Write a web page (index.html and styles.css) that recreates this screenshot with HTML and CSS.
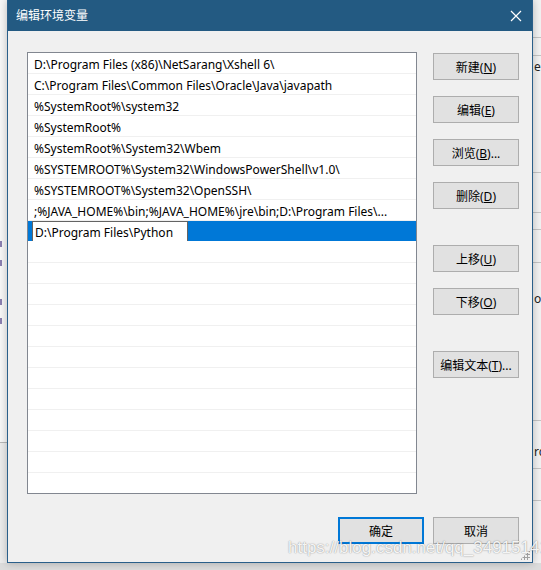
FILE: index.html
```html
<!DOCTYPE html>
<html lang="zh-CN">
<head>
	<meta charset="UTF-8">
	<title>编辑环境变量</title>
	<link rel="stylesheet" href="styles.css">
</head>
<body>
	<div class="desktop">
		<!-- bits of the windows behind the dialog -->
		<div class="back-left">
			<span class="mark" style="top:241px"></span>
			<span class="mark" style="top:260px"></span>
			<span class="mark" style="top:299px"></span>
			<span class="mark" style="top:318px"></span>
		</div>
		<div class="back-left-lower"></div>
		<div class="back-right">
			<span class="rline" style="top:37px"></span>
			<span class="rline" style="top:55px"></span>
			<span class="rtext" style="top:58px">e:</span>
			<span class="rline" style="top:172px"></span>
			<span class="rline" style="top:212px"></span>
			<span class="rline" style="top:229px"></span>
			<span class="rline" style="top:262px"></span>
			<span class="rtext" style="top:290px">o</span>
			<span class="rline" style="top:420px"></span>
			<span class="rtext" style="top:443px">rc</span>
			<span class="rline" style="top:468px"></span>
			<span class="rline" style="top:500px"></span>
		</div>
		<div class="back-bottom"></div>

		<div class="dialog">
			<div class="titlebar">
				<span class="title">编辑环境变量</span>
				<svg class="close" width="12" height="12" viewBox="0 0 12 12">
					<path d="M1 1 L11 11 M11 1 L1 11" stroke="#fff" stroke-width="1.2" fill="none"/>
				</svg>
			</div>
			<div class="content">
				<div class="main">
					<div class="list">
						<div class="row">D:\Program Files (x86)\NetSarang\Xshell 6\</div>
						<div class="row">C:\Program Files\Common Files\Oracle\Java\javapath</div>
						<div class="row">%SystemRoot%\system32</div>
						<div class="row">%SystemRoot%</div>
						<div class="row">%SystemRoot%\System32\Wbem</div>
						<div class="row">%SYSTEMROOT%\System32\WindowsPowerShell\v1.0\</div>
						<div class="row">%SYSTEMROOT%\System32\OpenSSH\</div>
						<div class="row">;%JAVA_HOME%\bin;%JAVA_HOME%\jre\bin;D:\Program Files\...</div>
						<div class="row selected"><span class="edit">D:\Program Files\Python</span></div>
						<div class="row"></div>
						<div class="row"></div>
						<div class="row"></div>
						<div class="row"></div>
						<div class="row"></div>
						<div class="row"></div>
						<div class="row"></div>
						<div class="row"></div>
						<div class="row"></div>
						<div class="row"></div>
						<div class="row"></div>
						<div class="row last"></div>
					</div>
					<div class="side">
						<button class="btn first">新建(<u>N</u>)</button>
						<button class="btn">编辑(<u>E</u>)</button>
						<button class="btn">浏览(<u>B</u>)...</button>
						<button class="btn">删除(<u>D</u>)</button>
						<button class="btn spaced">上移(<u>U</u>)</button>
						<button class="btn">下移(<u>O</u>)</button>
						<button class="btn spaced">编辑文本(<u>T</u>)...</button>
					</div>
				</div>
				<div class="footer">
					<button class="btn default">确定</button>
					<button class="btn">取消</button>
				</div>
			</div>
			<div class="grip"></div>
		</div>
		<div class="watermark">https://blog.csdn.net/qq_34915141</div>
	</div>
</body>
</html>
```

FILE: styles.css
```css
body {
	margin: 0;
	width: 541px;
	height: 570px;
	overflow: hidden;
	background: #f4f4f4;
	font-family: "Noto Sans", "Noto Sans CJK SC", sans-serif;
	font-size: 12px;
}
.desktop {
	position: relative;
	width: 541px;
	height: 570px;
}
.back-left {
	position: absolute;
	left: 0;
	top: 0;
	width: 8px;
	height: 442px;
	background: #f7f7f7;
}
.back-left .mark {
	position: absolute;
	left: 0;
	width: 2px;
	height: 6px;
	background: #8a7fb0;
}
.back-left-lower {
	position: absolute;
	left: 0;
	top: 442px;
	width: 8px;
	height: 128px;
	background: #ececec;
	border-top: 1px solid #b8b8b8;
}
.back-right {
	position: absolute;
	left: 533px;
	top: 0;
	width: 8px;
	height: 570px;
	background: #f2f2f2;
}
.back-right .rline {
	position: absolute;
	left: 0;
	width: 8px;
	height: 1px;
	background: #c4c4c4;
}
.back-right .rtext {
	position: absolute;
	left: 1px;
	font-size: 12px;
	color: #222;
}
.back-bottom {
	position: absolute;
	left: 0;
	top: 563px;
	width: 541px;
	height: 7px;
	background: #dcdcdc;
}
.dialog {
	position: absolute;
	left: 7px;
	top: 0;
	width: 526px;
	height: 563px;
	box-sizing: border-box;
	border: 1px solid #2a5f8a;
	border-top: none;
	background: #f0f0f0;
	box-shadow: 0 0 8px rgba(0, 0, 0, 0.25);
}
.titlebar {
	height: 31px;
	background: #235a82;
	display: flex;
	align-items: center;
	justify-content: space-between;
	padding: 0 10px 0 8px;
	color: #fff;
}
.title {
	font-size: 12px;
	padding-bottom: 2px;
}
.close {
	display: block;
}
.content {
	padding: 21px 13px 0 19px;
}
.main {
	display: flex;
	gap: 16px;
}
.list {
	width: 390px;
	height: 442px;
	box-sizing: border-box;
	border: 1px solid #828790;
	background: #fff;
	overflow: hidden;
}
.row {
	height: 21px;
	box-sizing: border-box;
	border-bottom: 1px solid #f0f0f0;
	padding: 3px 0 0 6px;
	line-height: 17px;
	color: #000;
	white-space: nowrap;
	overflow: hidden;
}
.row.selected {
	background: #0078d7;
	padding: 0 0 0 4px;
	border-bottom-color: #fff;
}
.row .edit {
	display: inline-block;
	width: 156px;
	height: 21px;
	box-sizing: border-box;
	border: 1px solid #646464;
	background: #fff;
	padding: 2px 0 0 2px;
	line-height: 17px;
	vertical-align: top;
}
.side {
	display: flex;
	flex-direction: column;
	gap: 16px;
}
.btn {
	width: 86px;
	height: 27px;
	box-sizing: border-box;
	border: 1px solid #adadad;
	background: #e1e1e1;
	font-family: "Noto Sans", "Noto Sans CJK SC", sans-serif;
	font-size: 12px;
	color: #000;
	padding: 0;
}
.btn u {
	text-underline-offset: 1px;
}
.btn.first {
	margin-top: 1px;
}
.btn.spaced {
	margin-top: 20px;
}
.footer {
	display: flex;
	justify-content: flex-end;
	gap: 9px;
	margin-top: 23px;
}
.btn.default {
	border: 2px solid #0078d7;
}
.grip {
	position: absolute;
	right: 2px;
	bottom: 2px;
	width: 10px;
	height: 10px;
	background-image: radial-gradient(circle, #a0a0a0 1px, transparent 1.2px);
	background-size: 3px 3px;
	clip-path: polygon(100% 0, 100% 100%, 0 100%);
}
.watermark {
	position: absolute;
	left: 288px;
	top: 538px;
	font-family: "Liberation Sans", Arial, sans-serif;
	font-size: 17px;
	color: rgba(255, 255, 255, 0.92);
	text-shadow: 0 0 1px rgba(0, 0, 0, 0.35), 0 0 2px rgba(0, 0, 0, 0.2);
	white-space: nowrap;
}
```
